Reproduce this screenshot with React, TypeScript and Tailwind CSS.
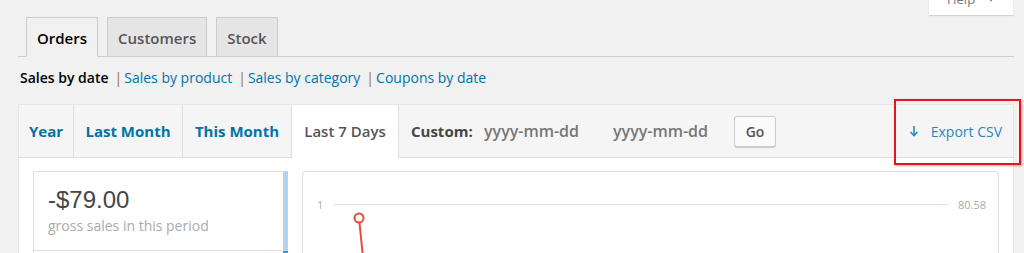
import React from "react";

const font = { fontFamily: '"Open Sans", "Liberation Sans", sans-serif' };

const reportTabs = [
  { label: "Orders", active: true },
  { label: "Customers", active: false },
  { label: "Stock", active: false },
];

const reportLinks = ["Sales by product", "Sales by category", "Coupons by date"];

const rangeTabs = [
  { label: "Year", active: false, w: "w-[55px]" },
  { label: "Last Month", active: false, w: "w-[109px]" },
  { label: "This Month", active: false, w: "w-[109px]" },
  { label: "Last 7 Days", active: true, w: "w-[107px]" },
];

const DownArrow = () => (
  <svg width="10" height="12" viewBox="0 0 10 12" fill="none" stroke="#2987c0" strokeWidth="1.6">
    <path d="M5 1v9.5" />
    <path d="M1.5 7l3.5 3.5L8.5 7" />
  </svg>
);

const Chart = () => (
  <svg width="697" height="90" viewBox="0 0 697 90" className="block">
    <text x="14" y="37" fontSize="11" fill="#aaa" style={font}>
      1
    </text>
    <line x1="31" y1="32.5" x2="645" y2="32.5" stroke="#dfe3e8" strokeWidth="1" />
    <text x="655" y="37" fontSize="11" fill="#aaa" style={font}>
      80.58
    </text>
    <line x1="56.5" y1="51" x2="60.5" y2="90" stroke="#e74c3c" strokeWidth="2" />
    <circle cx="56" cy="46" r="4.5" fill="#fff" stroke="#e74c3c" strokeWidth="2" />
  </svg>
);

export default function App() {
  return (
    <div className="h-[253px] bg-[#f1f1f1] pl-[18px] pr-[10px] overflow-hidden" style={font}>
      <div className="flex h-[15px] items-end justify-end pr-[1px]">
        <div className="flex h-[24px] w-[84px] shrink-0 items-start justify-center gap-[12px] bg-white text-[13px] leading-[16px] text-[#72777c] shadow-[0_1px_1px_rgba(0,0,0,0.12)]">
          <span>Help</span>
          <span className="text-[8px]">▼</span>
        </div>
      </div>

      <div className="mt-[2px] flex gap-[9px] border-b border-[#ccc] pl-[8px]">
        {reportTabs.map((t) => (
          <div
            key={t.label}
            className={`-mb-[1px] flex h-[40px] items-center border border-[#ccc] px-[10px] pt-[2px] text-[15px] font-semibold ${
              t.active
                ? "border-b-[#f1f1f1] bg-[#f1f1f1] text-[#000]"
                : "bg-[#e5e5e5] text-[#555]"
            }`}
          >
            {t.label}
          </div>
        ))}
      </div>

      <div className="mt-[7px] flex h-[26px] items-center pl-[2px] text-[14px]">
        <span className="font-semibold text-[#000]">Sales by date</span>
        {reportLinks.map((l) => (
          <React.Fragment key={l}>
            <span className="ml-[6px] mr-[2px] text-[#9b6b4a]">|</span>
            <span className="text-[#0073aa]">{l}</span>
          </React.Fragment>
        ))}
      </div>

      <div className="relative mt-[14px] border border-[#e5e5e5] bg-white">
        <div className="flex h-[53px] items-stretch border-b border-[#dfdfdf] bg-[#f5f5f5]">
          {rangeTabs.map((t) => (
            <div
              key={t.label}
              className={`flex ${t.w} items-center justify-center border-r border-[#dfdfdf] text-[15px] ${
                t.active
                  ? "-mb-[1px] bg-white font-semibold text-[#555]"
                  : "font-bold text-[#0073aa]"
              }`}
            >
              {t.label}
            </div>
          ))}
          <div className="flex items-center pl-[12px]">
            <span className="w-[61px] text-[15px] font-bold text-[#464646]">Custom:</span>
            <input
              readOnly
              placeholder="yyyy-mm-dd"
              className="ml-[12px] w-[100px] bg-transparent text-[16px] font-semibold outline-none placeholder:text-[#777]"
            />
            <input
              readOnly
              placeholder="yyyy-mm-dd"
              className="ml-[29px] w-[100px] bg-transparent text-[16px] font-semibold outline-none placeholder:text-[#777]"
            />
            <button className="ml-[21px] h-[31px] w-[42px] rounded-[3px] border border-[#ccc] bg-[#fafafa] text-[14px] font-semibold text-[#555] shadow-[0_1px_0_#ccc]">
              Go
            </button>
          </div>
          <div className="ml-auto flex items-center gap-[12px] pr-[11px] text-[14px] text-[#2987c0]">
            <DownArrow />
            <span>Export CSV</span>
          </div>
        </div>

        <div className="flex gap-[14px] px-[14px] pt-[13px]">
          <div className="w-[255px] shrink-0">
            <div className="border border-r-[5px] border-[#dfdfdf] border-r-[#b1d4ea] p-[14px]">
              <div
                className="text-[24px] leading-[1.2] text-[#464646]"
                style={{ fontFamily: '"Liberation Sans", Arial, sans-serif' }}
              >
                -$79.00
              </div>
              <div className="text-[14px] leading-[21px] text-[#aaa]">gross sales in this period</div>
            </div>
            <div className="h-[40px] border border-t-0 border-r-[5px] border-[#dfdfdf] border-r-[#3498db]" />
          </div>
          <div className="min-w-0 flex-1 overflow-hidden rounded-t-[4px] border border-b-0 border-[#dfdfdf]">
            <Chart />
          </div>
        </div>

        <div className="pointer-events-none absolute left-[875px] top-[-6px] h-[66px] w-[127px] border-[2px] border-[#e8141b] shadow-[1px_1px_2px_rgba(0,0,0,0.3)]" />
      </div>
    </div>
  );
}
